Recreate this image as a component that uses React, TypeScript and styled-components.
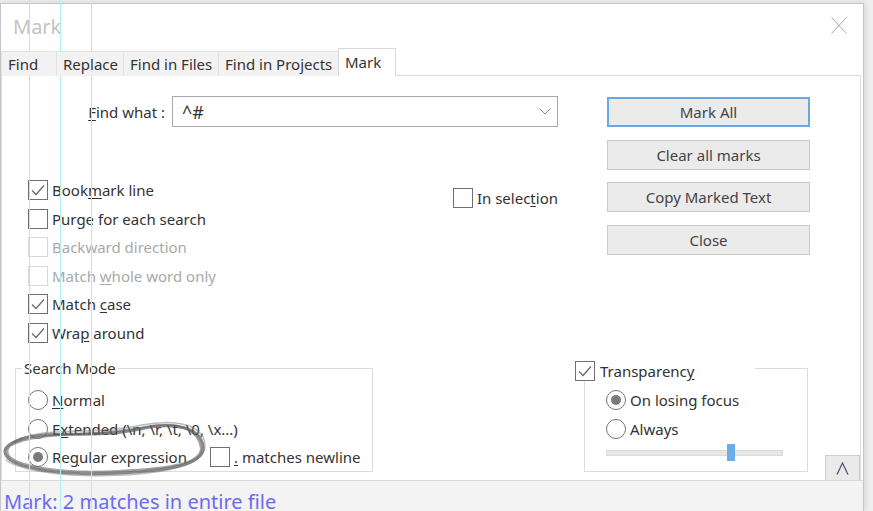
import React from 'react';
import styled, { createGlobalStyle } from 'styled-components';

const GlobalStyle = createGlobalStyle`
  html, body {
    margin: 0;
    padding: 0;
    background: #efefef;
  }
  body {
    font-family: "Noto Sans", "Liberation Sans", sans-serif;
    font-size: 15px;
    color: #333;
  }
`;

const Screen = styled.div`
  position: relative;
  width: 873px;
  height: 511px;
  box-sizing: border-box;
  padding-top: 3px;
  overflow: hidden;
  background: #efefef;
`;

const Window = styled.div`
  width: 864px;
  height: 508px;
  box-sizing: border-box;
  border: 1px solid #c6c6c6;
  border-bottom: none;
  background: #fff;
  display: flex;
  flex-direction: column;
  box-shadow: 1px 0 6px rgba(0, 0, 0, 0.12);
`;

const TitleBar = styled.div`
  height: 44px;
  flex: none;
  display: flex;
  align-items: center;
  justify-content: space-between;
  padding: 0 16px 0 12px;
`;

const Title = styled.span`
  font-size: 20px;
  color: #c3c3c3;
`;

const CloseIcon = styled.svg`
  width: 16px;
  height: 17px;
  margin-top: -2px;
`;

const TabStrip = styled.div`
  height: 28px;
  flex: none;
  display: flex;
  align-items: flex-end;
`;

const Tab = styled.div<{ $w: number; $active?: boolean }>`
  width: ${p => p.$w}px;
  height: ${p => (p.$active ? 28 : 25)}px;
  box-sizing: border-box;
  padding: 0 0 ${p => (p.$active ? 1 : 0)}px 6px;
  margin-left: -1px;
  border: 1px solid ${p => (p.$active ? '#d9d9d9' : '#e2e2e2')};
  border-bottom: none;
  background: ${p => (p.$active ? '#fff' : '#f2f2f2')};
  display: flex;
  align-items: center;
  color: #333;
  white-space: nowrap;
  position: relative;
  z-index: ${p => (p.$active ? 2 : 1)};

  &:first-child {
    margin-left: 0;
  }
`;

const Panel = styled.div`
  width: 860px;
  height: 405px;
  flex: none;
  margin-top: -1px;
  box-sizing: border-box;
  border: 1px solid #dcdcdc;
  border-bottom: none;
  display: flex;
  flex-direction: column;
`;

const TopSection = styled.div`
  display: flex;
`;

const LeftCol = styled.div`
  width: 556px;
  display: flex;
  flex-direction: column;
`;

const FindRow = styled.div`
  margin-top: 20px;
  height: 31px;
  display: flex;
  align-items: center;
`;

const FindLabel = styled.label`
  width: 163px;
  text-align: right;
  white-space: nowrap;
`;

const Combo = styled.div`
  width: 386px;
  height: 31px;
  margin-left: 7px;
  box-sizing: border-box;
  border: 1px solid #a9a9a9;
  display: flex;
  align-items: center;
  justify-content: space-between;
  padding: 0 6px 0 9px;
  font-size: 18px;
  color: #333;
`;

const Options = styled.div`
  margin-top: 49px;
  display: flex;
  justify-content: space-between;
`;

const CheckList = styled.div`
  padding-left: 26px;
  display: flex;
  flex-direction: column;
`;

const Option = styled.div<{ $disabled?: boolean; $width?: number; $offset?: number }>`
  display: flex;
  align-items: center;
  gap: 4px;
  height: 28.5px;
  flex: none;
  white-space: nowrap;
  color: ${p => (p.$disabled ? '#a9a9a9' : '#333')};
  ${p => (p.$width ? `width: ${p.$width}px;` : '')}
  ${p => (p.$offset ? `margin-top: ${p.$offset}px;` : '')}
`;

const Key = styled.span`
  text-decoration: underline;
  text-underline-offset: 2px;
`;

const Box = styled.span<{ $disabled?: boolean }>`
  width: 20px;
  height: 20px;
  flex: none;
  box-sizing: border-box;
  border: 1px solid ${p => (p.$disabled ? '#d8d8d8' : '#6f6f6f')};
  background: #fff;
  display: inline-flex;
  align-items: center;
  justify-content: center;
`;

const Radio = styled.span<{ $checked?: boolean }>`
  width: 20px;
  height: 20px;
  flex: none;
  box-sizing: border-box;
  border: 1px solid #747474;
  border-radius: 50%;
  background: #fff;
  display: inline-flex;
  align-items: center;
  justify-content: center;

  &::after {
    content: '';
    width: 10px;
    height: 10px;
    border-radius: 50%;
    background: ${p => (p.$checked ? '#7a7a7a' : 'transparent')};
  }
`;

const ButtonCol = styled.div`
  margin: 21px 0 0 49px;
  width: 203px;
  display: flex;
  flex-direction: column;
  gap: 12.67px;
`;

const ActionButton = styled.button<{ $default?: boolean }>`
  width: 203px;
  height: 30px;
  box-sizing: border-box;
  padding: 0;
  background: #ebebeb;
  border: ${p => (p.$default ? '2px solid #6aa8e2' : '1px solid #cacaca')};
  font: inherit;
  color: #444;
`;

const BottomSection = styled.div`
  margin-top: auto;
  padding-left: 13px;
  display: flex;
  align-items: flex-end;
`;

const GroupBox = styled.div<{ $w: number; $gapLeft?: number; $padLeft: number }>`
  position: relative;
  width: ${p => p.$w}px;
  height: 104px;
  margin: 0 0 8px ${p => p.$gapLeft || 0}px;
  box-sizing: border-box;
  border: 1px solid #dcdcdc;
  padding: 17px 0 0 ${p => p.$padLeft}px;
  display: flex;
  flex-direction: column;
`;

const Legend = styled.div`
  position: absolute;
  top: -11px;
  left: 6px;
  padding: 0 2px;
  background: #fff;
  color: #333;
  white-space: nowrap;
`;

const CheckLegend = styled.div`
  position: absolute;
  top: -8px;
  left: -10px;
  width: 180px;
  height: 20px;
  background: #fff;
  display: flex;
  align-items: center;
  gap: 5px;
  white-space: nowrap;
`;

const Slider = styled.div`
  position: relative;
  margin-top: 1px;
  width: 177px;
  height: 17px;
`;

const Track = styled.div`
  position: absolute;
  left: 0;
  right: 0;
  top: 6px;
  height: 6px;
  box-sizing: border-box;
  background: #e8e8e8;
  border: 1px solid #dadada;
`;

const Thumb = styled.div`
  position: absolute;
  top: 0;
  width: 8px;
  height: 17px;
  background: #6aafe9;
`;

const CollapseButton = styled.div`
  width: 35px;
  height: 25px;
  margin-left: 17px;
  box-sizing: border-box;
  border: 1px solid #cfcfcf;
  border-bottom: none;
  background: #eaeaea;
  display: flex;
  align-items: center;
  justify-content: center;
`;

const StatusBar = styled.div`
  flex: 1;
  border-top: 1px solid #dadada;
  background: #f3f3f3;
  padding: 7px 0 0 3px;
  font-size: 20px;
  line-height: 27px;
  color: #6b6bf0;
  white-space: nowrap;
  overflow: hidden;
`;

const GuideLine = styled.div<{ $x: number }>`
  position: absolute;
  top: 0;
  bottom: 0;
  left: ${p => p.$x}px;
  width: 1px;
  background: #aeeef0;
  pointer-events: none;
`;

const Scribble = styled.svg`
  position: absolute;
  left: 0;
  top: 0;
  pointer-events: none;
`;

const Check = () => (
  <svg width="18" height="18" viewBox="0 0 18 18">
    <polyline points="3,9.5 7,13.5 15,4.5" fill="none" stroke="#6a6a6a" strokeWidth="1.3" />
  </svg>
);

const CheckBox = ({ checked, disabled }: { checked?: boolean; disabled?: boolean }) => (
  <Box $disabled={disabled}>{checked && <Check />}</Box>
);

export default function App() {
  return (
    <>
      <GlobalStyle />
      <Screen>
        <Window>
          <TitleBar>
            <Title>Mark</Title>
            <CloseIcon viewBox="0 0 16 17">
              <line x1="0.5" y1="0.5" x2="15.5" y2="16.5" stroke="#a8a8a8" strokeWidth="1" />
              <line x1="15.5" y1="0.5" x2="0.5" y2="16.5" stroke="#a8a8a8" strokeWidth="1" />
            </CloseIcon>
          </TitleBar>

          <TabStrip>
            <Tab $w={56}>Find</Tab>
            <Tab $w={68}>Replace</Tab>
            <Tab $w={96}>Find in Files</Tab>
            <Tab $w={121}>Find in Projects</Tab>
            <Tab $w={58} $active>Mark</Tab>
          </TabStrip>

          <Panel>
            <TopSection>
              <LeftCol>
                <FindRow>
                  <FindLabel><Key>F</Key>ind what :</FindLabel>
                  <Combo>
                    <span>^#</span>
                    <svg width="12" height="7" viewBox="0 0 12 7">
                      <polyline points="0.5,0.5 6,6 11.5,0.5" fill="none" stroke="#8a8a8a" strokeWidth="1" />
                    </svg>
                  </Combo>
                </FindRow>

                <Options>
                  <CheckList>
                    <Option><CheckBox checked /><span>Book<Key>m</Key>ark line</span></Option>
                    <Option><CheckBox /><span>Purge for each search</span></Option>
                    <Option $disabled><CheckBox disabled /><span>Backward direction</span></Option>
                    <Option $disabled><CheckBox disabled /><span>Match <Key>w</Key>hole word only</span></Option>
                    <Option><CheckBox checked /><span>Match <Key>c</Key>ase</span></Option>
                    <Option><CheckBox checked /><span>Wra<Key>p</Key> around</span></Option>
                  </CheckList>
                  <Option $offset={8}><CheckBox /><span>In selec<Key>t</Key>ion</span></Option>
                </Options>
              </LeftCol>

              <ButtonCol>
                <ActionButton $default>Mark All</ActionButton>
                <ActionButton>Clear all marks</ActionButton>
                <ActionButton>Copy Marked Text</ActionButton>
                <ActionButton>Close</ActionButton>
              </ButtonCol>
            </TopSection>

            <BottomSection>
              <GroupBox $w={358} $padLeft={12}>
                <Legend>Search Mode</Legend>
                <Option><Radio /><span><Key>N</Key>ormal</span></Option>
                <Option><Radio /><span>E<Key>x</Key>tended (\n, \r, \t, \0, \x...)</span></Option>
                <Option>
                  <Option $width={178}><Radio $checked /><span>Re<Key>g</Key>ular expression</span></Option>
                  <CheckBox />
                  <span><Key>.</Key> matches newline</span>
                </Option>
              </GroupBox>

              <GroupBox $w={224} $gapLeft={211} $padLeft={21}>
                <CheckLegend>
                  <CheckBox checked />
                  <span>Transparenc<Key>y</Key></span>
                </CheckLegend>
                <Option><Radio $checked /><span>On losing focus</span></Option>
                <Option><Radio /><span>Always</span></Option>
                <Slider>
                  <Track />
                  <Thumb style={{ left: 121 }} />
                </Slider>
              </GroupBox>

              <CollapseButton>
                <svg width="13" height="13" viewBox="0 0 13 13">
                  <polyline points="1,12.5 6.5,1 12,12.5" fill="none" stroke="#4a4f6a" strokeWidth="1.2" />
                </svg>
              </CollapseButton>
            </BottomSection>
          </Panel>

          <StatusBar>Mark: 2 matches in entire file</StatusBar>
        </Window>

        <Scribble width="873" height="511" viewBox="0 0 873 511">
          <path
            d="M 14 442 C 40 428, 90 440, 140 429 C 176 421, 200 428, 203 446 C 205 462, 180 470, 120 473 C 70 476, 20 470, 8 458 C 2 451, 5 446, 16 441"
            fill="none" stroke="#555" strokeWidth="3" strokeOpacity="0.7" strokeLinecap="round"
          />
          <path
            d="M 10 446 C 36 431, 95 437, 145 427 C 180 420, 198 430, 201 448 C 201 463, 175 468, 118 471 C 66 474, 18 467, 9 456 C 5 450, 8 445, 22 438"
            fill="none" stroke="#666" strokeWidth="2" strokeOpacity="0.6" strokeLinecap="round"
          />
          <path
            d="M 18 440 C 45 426, 92 436, 142 425 C 178 418, 204 426, 205 445 C 206 460, 184 472, 122 475 C 72 478, 22 472, 6 460"
            fill="none" stroke="#777" strokeWidth="1.4" strokeOpacity="0.5" strokeLinecap="round"
          />
        </Scribble>

        <GuideLine $x={29} />
        <GuideLine $x={60} />
        <GuideLine $x={91} />
      </Screen>
    </>
  );
}
